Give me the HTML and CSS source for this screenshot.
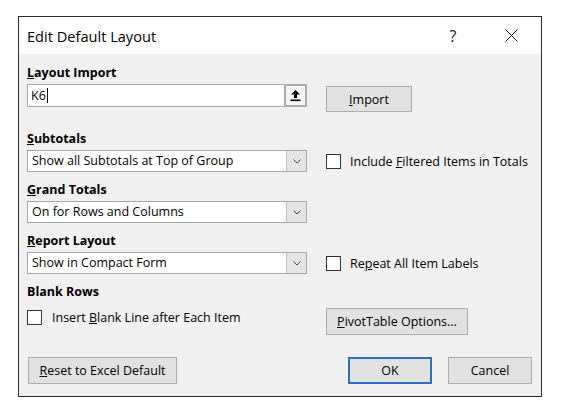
FILE: index.html
```html
<!DOCTYPE html>
<html>
<head>
<meta charset="utf-8">
<link rel="stylesheet" href="styles.css">
</head>
<body>
<div class="dialog">
  <div class="titlebar">
    <span class="title">Edit Default Layout</span>
    <span class="help">?</span>
    <span class="close"><svg width="13" height="13" viewBox="0 0 13 13"><path d="M0.5 0.5 L12.5 12.5 M12.5 0.5 L0.5 12.5" stroke="#111" stroke-width="1" fill="none"/></svg></span>
  </div>
  <div class="body">
    <div class="label"><u>L</u>ayout Import</div>
    <div class="row row-import">
      <div class="textbox">
        <div class="field"><span class="value">K6</span><span class="caret"></span></div>
        <span class="upload"><svg width="11" height="13" viewBox="0 0 11 13"><path d="M5.5 1 L10 5.5 H7 V9 H4 V5.5 H1 Z" fill="#000"/><rect x="0.5" y="10.5" width="10" height="1.6" fill="#000"/></svg></span>
      </div>
      <button class="btn btn-import"><u>I</u>mport</button>
    </div>

    <div class="label gap-big"><u>S</u>ubtotals</div>
    <div class="row">
      <div class="select"><span class="sel-text">Show all Subtotals at Top of Group</span><span class="arrow"><svg width="8" height="5" viewBox="0 0 8 5"><polyline points="0.5,0.5 4,4 7.5,0.5" stroke="#444" stroke-width="1" fill="none"/></svg></span></div>
      <label class="check"><span class="box"></span><span>Include <u>F</u>iltered Items in Totals</span></label>
    </div>

    <div class="label gap"><u>G</u>rand Totals</div>
    <div class="row">
      <div class="select"><span class="sel-text">On for Rows and Columns</span><span class="arrow"><svg width="8" height="5" viewBox="0 0 8 5"><polyline points="0.5,0.5 4,4 7.5,0.5" stroke="#444" stroke-width="1" fill="none"/></svg></span></div>
    </div>

    <div class="label gap"><u>R</u>eport Layout</div>
    <div class="row">
      <div class="select"><span class="sel-text">Show in Compact Form</span><span class="arrow"><svg width="8" height="5" viewBox="0 0 8 5"><polyline points="0.5,0.5 4,4 7.5,0.5" stroke="#444" stroke-width="1" fill="none"/></svg></span></div>
      <label class="check"><span class="box"></span><span>Re<u>p</u>eat All Item Labels</span></label>
    </div>

    <div class="label gap">Blank Rows</div>
    <div class="row row-blank">
      <label class="check check-blank"><span class="box"></span><span>Insert <u>B</u>lank Line after Each Item</span></label>
      <button class="btn btn-pivot"><u>P</u>ivotTable Options...</button>
    </div>

    <div class="footer">
      <button class="btn btn-reset"><u>R</u>eset to Excel Default</button>
      <button class="btn btn-ok">OK</button>
      <button class="btn btn-cancel">Cancel</button>
    </div>
  </div>
</div>
</body>
</html>
```

FILE: styles.css
```css
body {
  margin: 0;
  background: #ffffff;
  font-family: "Open Sans", "Noto Sans", sans-serif;
  font-size: 12.5px;
  color: #000;
}

.dialog {
  margin: 16px 0 0 18px;
  width: 524px;
  height: 381px;
  box-sizing: border-box;
  border: 1px solid #2b2b2b;
  display: flex;
  flex-direction: column;
}

.titlebar {
  height: 37px;
  flex: none;
  background: #fff;
  display: flex;
  align-items: center;
  padding-left: 8px;
  font-size: 14.6px;
}

.title {
  flex: 1;
}

.help {
  width: 46px;
  margin-right: 12px;
  text-align: center;
  font-size: 16px;
  font-weight: 400;
  color: #222;
}

.close {
  width: 46px;
  margin-right: 7px;
  display: flex;
  justify-content: center;
}

.body {
  flex: 1;
  background: #f0f0f0;
  padding: 9px 9px 12px 8px;
}

.label {
  font-weight: 700;
  height: 16px;
  line-height: 20px;
}

.label.gap {
  margin-top: 8px;
}

.label.gap-big {
  margin-top: 17px;
}

.row {
  margin-top: 5px;
  display: grid;
  grid-template-columns: 280px auto;
  column-gap: 19px;
  align-items: center;
}

.row-import {
  align-items: start;
}

.row-blank {
  margin-top: 10px;
  align-items: start;
}

.textbox {
  display: flex;
  height: 23px;
}

.field {
  flex: 1;
  background: #fff;
  border: 1px solid #a6a6a6;
  border-right: none;
  display: flex;
  align-items: center;
  padding-left: 3px;
}

.caret {
  display: inline-block;
  width: 1px;
  height: 15px;
  background: #000;
  margin-left: 1px;
}

.upload {
  width: 23px;
  box-sizing: border-box;
  border: 2px solid #acacac;
  background: #f6f6f6;
  display: flex;
  align-items: center;
  justify-content: center;
}

.btn {
  font-family: inherit;
  font-size: 12.5px;
  color: #000;
  background: #e1e1e1;
  border: 1px solid #adadad;
  padding: 0;
  height: 27px;
  box-sizing: border-box;
}

.btn-import {
  width: 86px;
  height: 26px;
  margin-top: 2px;
}

.select {
  height: 22px;
  box-sizing: border-box;
  background: #fff;
  border: 1px solid #a6a6a6;
  display: flex;
  align-items: stretch;
}

.sel-text {
  flex: 1;
  padding-left: 4px;
  line-height: 20px;
  white-space: nowrap;
}

.arrow {
  width: 19px;
  background: #e5e5e5;
  border-left: 1px solid #c4c4c4;
  display: flex;
  align-items: center;
  justify-content: center;
}

.check {
  display: flex;
  align-items: center;
  gap: 9px;
}

.box {
  width: 15px;
  height: 15px;
  box-sizing: border-box;
  border: 1px solid #333;
  background: #fff;
  flex: none;
}

.check-blank {
  margin-top: 1px;
  gap: 10px;
}

.btn-pivot {
  width: 142px;
}

.footer {
  margin-top: 22px;
  display: flex;
  gap: 16px;
}

.btn-reset {
  width: 149px;
  margin-left: 1px;
}

.btn-ok {
  width: 84px;
  margin-left: auto;
  border: 2px solid #2a6fc0;
}

.btn-cancel {
  width: 84px;
}
```
